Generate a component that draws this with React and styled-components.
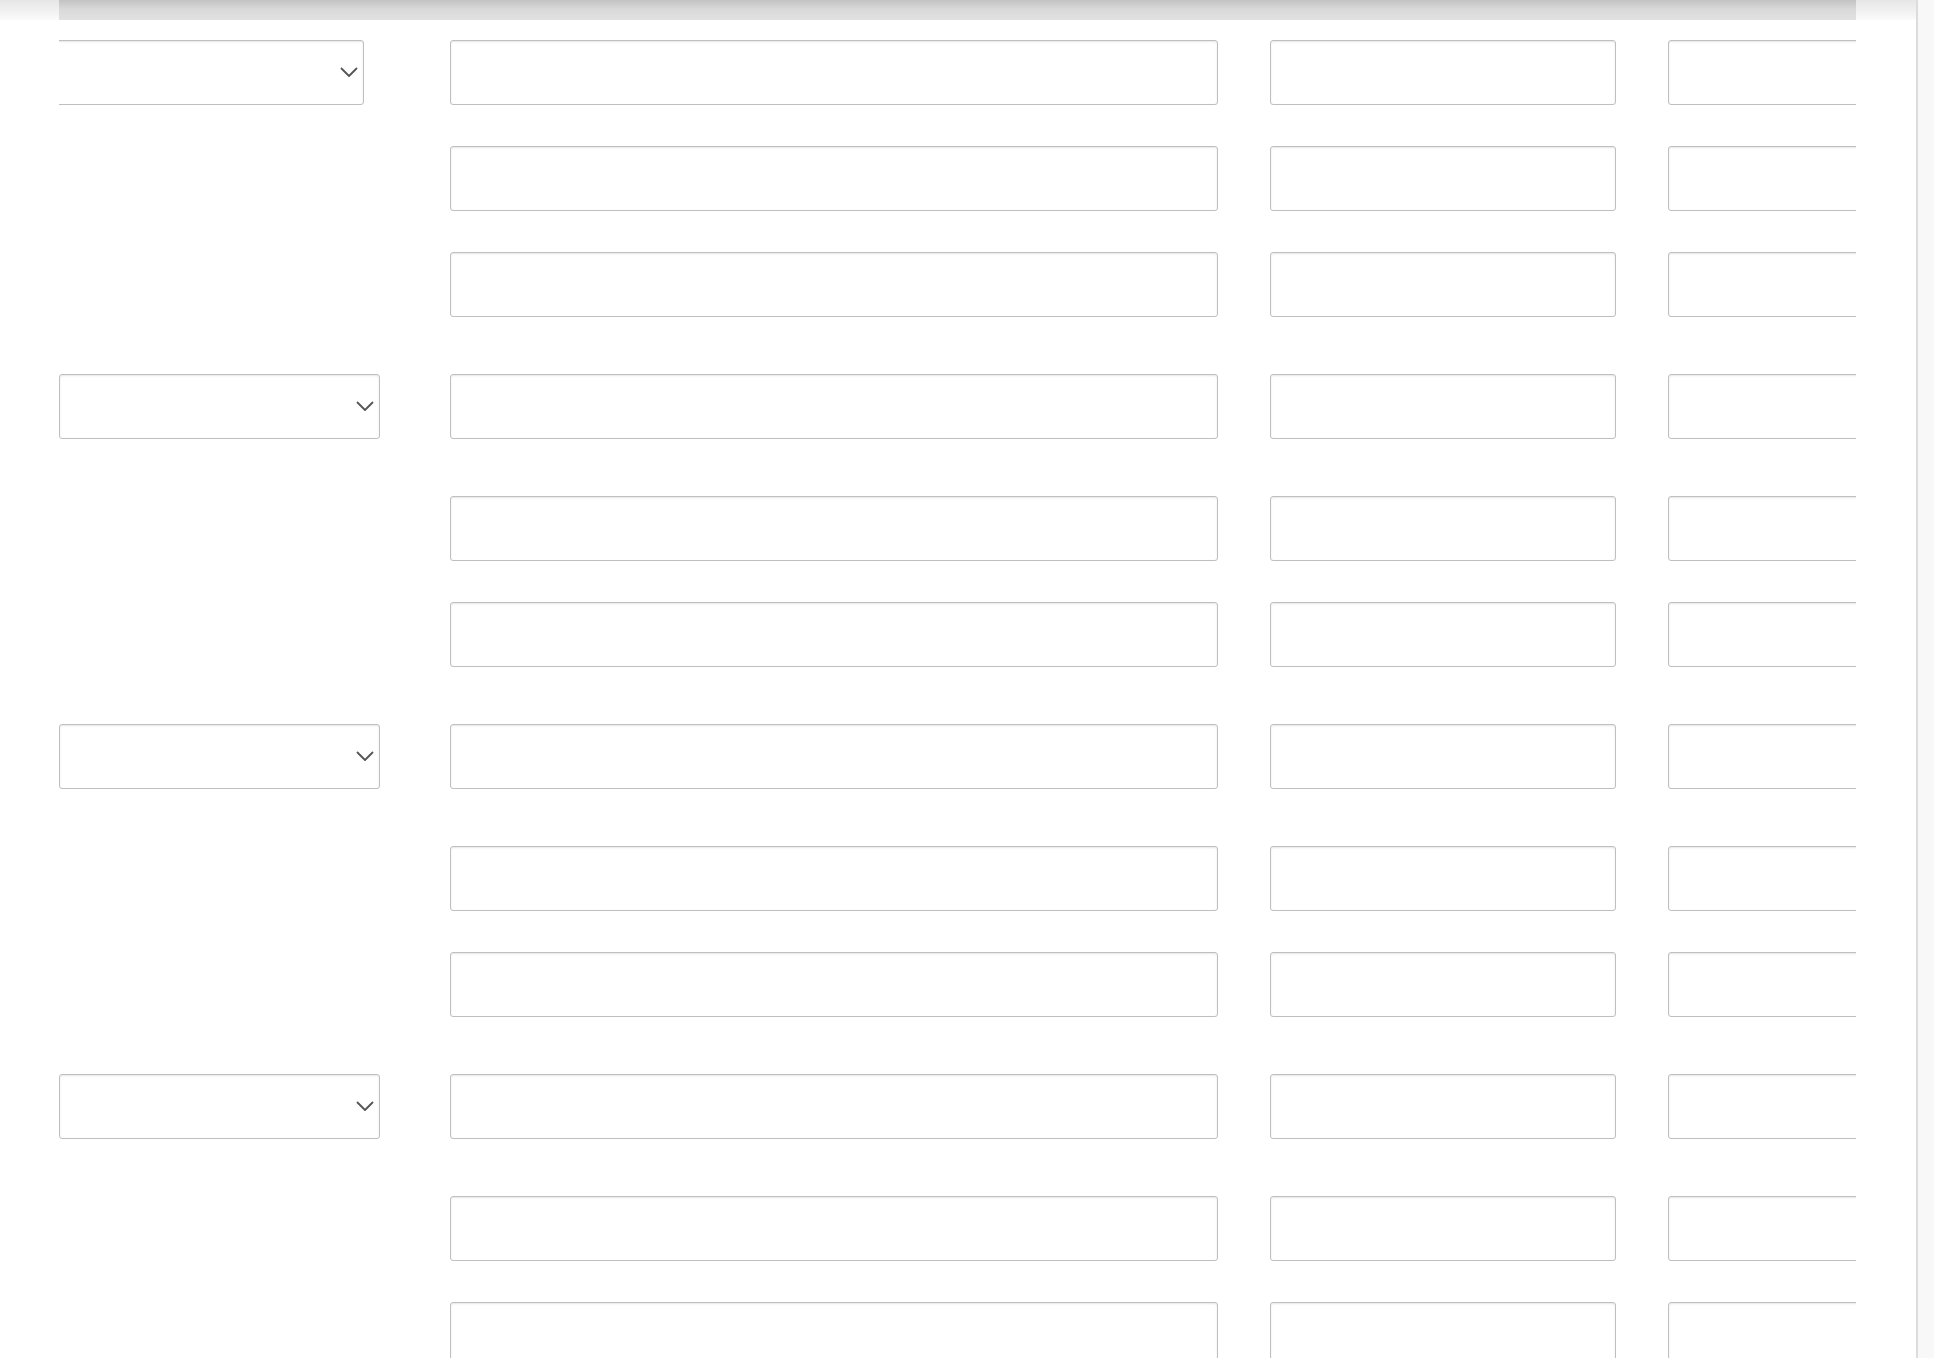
import React from "react"
import styled, { createGlobalStyle } from "styled-components"

const GlobalStyle = createGlobalStyle`
  html, body {
    margin: 0;
    padding: 0;
    height: 100%;
    overflow: hidden;
    background: #fff;
    font-family: "Liberation Sans", Arial, sans-serif;
  }
  #root {
    height: 100%;
  }
`

const Page = styled.div`
  display: flex;
  height: 100vh;
`

const Main = styled.main`
  flex: 1;
  min-width: 0;
  padding: 0 60px 0 59px;
  background: linear-gradient(#e6e6e6, #fbfbfb 20px, #fff 20px) no-repeat;
`

const Rail = styled.div`
  width: 16px;
  border-left: 2px solid #dcdcdc;
  background: #f8f8f8;
`

const Sheet = styled.div`
  height: 100%;
  overflow: hidden;
`

const TopBar = styled.div`
  height: 20px;
  background: linear-gradient(#c2c2c2, #d9d9d9 45%, #e1e1e1);
`

const Groups = styled.div`
  display: flex;
  flex-direction: column;
  gap: 57px;
  padding-top: 20px;
`

const Group = styled.section`
  display: flex;
  flex-direction: column;
  gap: 41px;
`

const Row = styled.div`
  display: grid;
  grid-template-columns: 339px 768px 346px 346px;
  column-gap: 52px;
  height: 65px;
  margin-bottom: ${(p) => (p.$lead ? "16px" : "0")};
`

const Cell = styled.div`
  min-width: 0;
  height: 65px;
`

const boxLook = `
  box-sizing: border-box;
  height: 65px;
  border: 1px solid #bfbfbf;
  border-radius: 3px;
  background: #fff;
  box-shadow: inset 0 1px 2px rgba(0, 0, 0, 0.1);
`

const Field = styled.input`
  ${boxLook}
  display: block;
  width: 100%;
  margin: 0;
  padding: 6px 12px;
  font: 16px "Liberation Sans", Arial, sans-serif;
  outline: none;
`

const Select = styled.div`
  ${boxLook}
  display: flex;
  align-items: center;
  justify-content: flex-end;
  width: ${(p) => (p.$narrow ? "315px" : "321px")};
  margin-left: ${(p) => (p.$narrow ? "-10px" : "0")};
  padding-right: 5px;
`

const Chevron = () => (
  <svg width="18" height="11" viewBox="0 0 18 11" fill="none">
    <polyline
      points="1.5,1.5 9,9 16.5,1.5"
      stroke="#555"
      strokeWidth="1.8"
      strokeLinecap="round"
      strokeLinejoin="round"
    />
  </svg>
)

const Inputs = () => (
  <>
    <Cell>
      <Field />
    </Cell>
    <Cell>
      <Field />
    </Cell>
    <Cell>
      <Field />
    </Cell>
  </>
)

const GroupBlock = ({ first }) => (
  <Group>
    <Row $lead={!first}>
      <Cell>
        <Select $narrow={first}>
          <Chevron />
        </Select>
      </Cell>
      <Inputs />
    </Row>
    <Row>
      <Cell />
      <Inputs />
    </Row>
    <Row>
      <Cell />
      <Inputs />
    </Row>
  </Group>
)

const App = () => (
  <Page>
    <GlobalStyle />
    <Main>
      <Sheet>
        <TopBar />
        <Groups>
          <GroupBlock first />
          <GroupBlock />
          <GroupBlock />
          <GroupBlock />
        </Groups>
      </Sheet>
    </Main>
    <Rail />
  </Page>
)

export default App
